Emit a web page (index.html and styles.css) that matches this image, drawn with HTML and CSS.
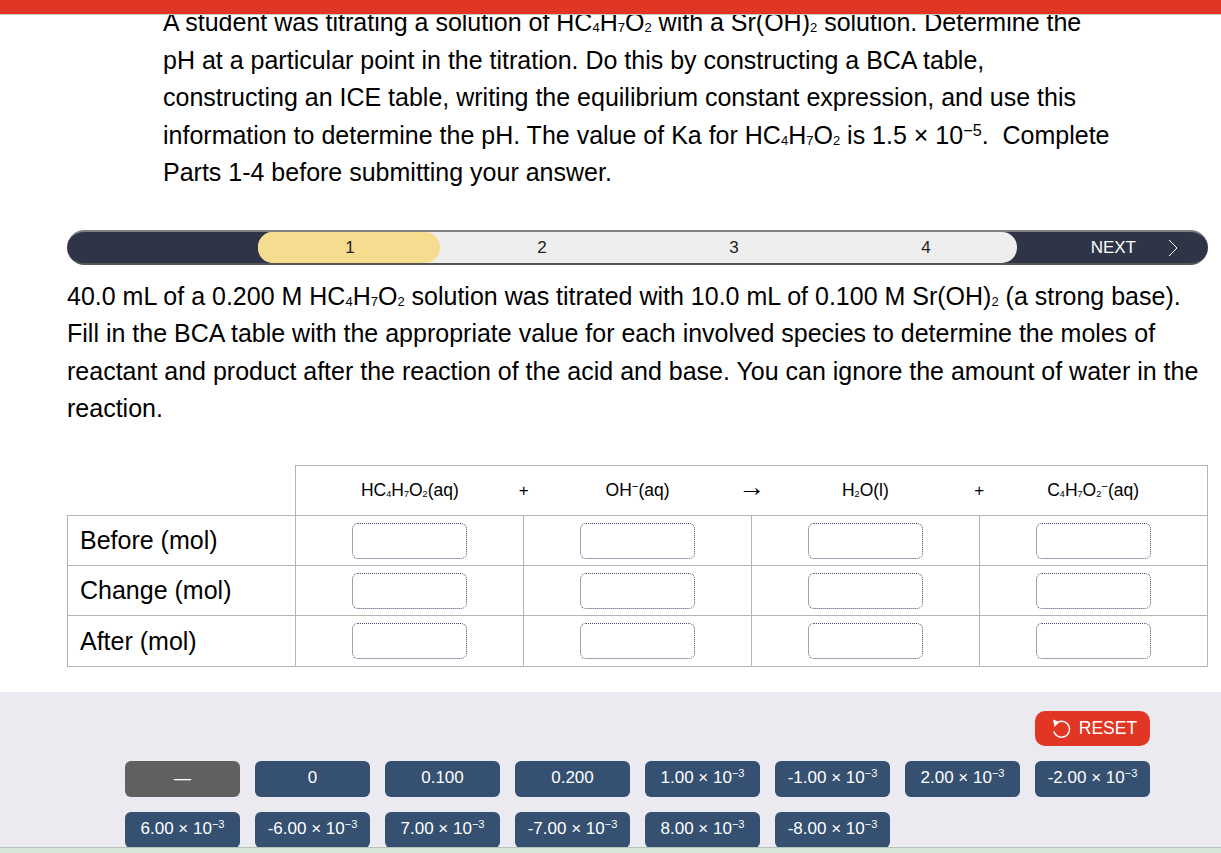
FILE: index.html
```html
<!DOCTYPE html>
<html lang="en">
<head>
    <meta charset="UTF-8">
    <meta name="viewport" content="width=device-width, initial-scale=1.0">
    <title>BCA Table</title>
    <link rel="stylesheet" href="styles.css">
</head>
<body>
    <div class="topbar"></div>

    <p class="prompt">A student was titrating a solution of HC<sub>4</sub>H<sub>7</sub>O<sub>2</sub> with a Sr(OH)<sub>2</sub> solution. Determine the pH at a particular point in the titration. Do this by constructing a BCA table, constructing an ICE table, writing the equilibrium constant expression, and use this information to determine the pH. The value of Ka for HC<sub>4</sub>H<sub>7</sub>O<sub>2</sub> is 1.5 × 10<sup>−5</sup>.&nbsp; Complete Parts 1-4 before submitting your answer.</p>

    <div class="stepper">
        <div class="rail">
            <div class="step active"><span>1</span></div>
            <div class="step"><span>2</span></div>
            <div class="step"><span>3</span></div>
            <div class="step"><span>4</span></div>
        </div>
        <div class="next">
            <span>NEXT</span>
            <svg class="chevron" width="10" height="18" viewBox="0 0 10 18"><path d="M1 1l8 8-8 8" fill="none" stroke="#fff" stroke-width="1"/></svg>
        </div>
    </div>

    <p class="question">40.0 mL of a 0.200 M HC<sub>4</sub>H<sub>7</sub>O<sub>2</sub> solution was titrated with 10.0 mL of 0.100 M Sr(OH)<sub>2</sub> (a strong base). Fill in the BCA table with the appropriate value for each involved species to determine the moles of reactant and product after the reaction of the acid and base. You can ignore the amount of water in the reaction.</p>

    <table class="bca">
        <tr class="head">
            <th class="blank"></th>
            <th colspan="4">
                <div class="equation">
                    <span class="species">HC<sub>4</sub>H<sub>7</sub>O<sub>2</sub>(aq)</span>
                    <span class="op">+</span>
                    <span class="species">OH<sup>−</sup>(aq)</span>
                    <span class="op arrow">→</span>
                    <span class="species">H<sub>2</sub>O(l)</span>
                    <span class="op">+</span>
                    <span class="species">C<sub>4</sub>H<sub>7</sub>O<sub>2</sub><sup>−</sup>(aq)</span>
                </div>
            </th>
        </tr>
        <tr>
            <td class="label">Before (mol)</td>
            <td><div class="drop"></div></td>
            <td><div class="drop"></div></td>
            <td><div class="drop"></div></td>
            <td><div class="drop"></div></td>
        </tr>
        <tr>
            <td class="label">Change (mol)</td>
            <td><div class="drop"></div></td>
            <td><div class="drop"></div></td>
            <td><div class="drop"></div></td>
            <td><div class="drop"></div></td>
        </tr>
        <tr class="last">
            <td class="label">After (mol)</td>
            <td><div class="drop"></div></td>
            <td><div class="drop"></div></td>
            <td><div class="drop"></div></td>
            <td><div class="drop"></div></td>
        </tr>
    </table>

    <div class="tray">
        <div class="tray-actions">
            <button class="reset">
                <svg width="20" height="20" viewBox="0 0 20 20"><path d="M6.5 2.8A8 8 0 1 1 1.9 12.5" fill="none" stroke="#fff" stroke-width="1.5"/><path d="M1 .5l6.5 2.5-5 5z" fill="#fff"/></svg>
                RESET
            </button>
        </div>
        <div class="tiles">
            <button class="tile used">—</button>
            <button class="tile">0</button>
            <button class="tile">0.100</button>
            <button class="tile">0.200</button>
            <button class="tile">1.00 × 10<sup>−3</sup></button>
            <button class="tile">-1.00 × 10<sup>−3</sup></button>
            <button class="tile">2.00 × 10<sup>−3</sup></button>
            <button class="tile">-2.00 × 10<sup>−3</sup></button>
            <button class="tile">6.00 × 10<sup>−3</sup></button>
            <button class="tile">-6.00 × 10<sup>−3</sup></button>
            <button class="tile">7.00 × 10<sup>−3</sup></button>
            <button class="tile">-7.00 × 10<sup>−3</sup></button>
            <button class="tile">8.00 × 10<sup>−3</sup></button>
            <button class="tile">-8.00 × 10<sup>−3</sup></button>
        </div>
    </div>

    <div class="footer-strip"></div>
</body>
</html>
```

FILE: styles.css
```css
html, body {
    margin: 0;
    height: 853px;
    overflow: hidden;
}
body {
    position: relative;
    padding-top: 4px;
    box-sizing: border-box;
    font-family: "Liberation Sans", Arial, sans-serif;
    color: #000;
    background: #fff;
}
.topbar {
    position: absolute;
    top: 0;
    left: 0;
    right: 0;
    height: 14px;
    background: #e03623;
    border-bottom: 1px solid #c8c8c8;
    z-index: 2;
}
sub {
    font-size: 0.52em;
    line-height: 0;
    vertical-align: -0.1em;
}
sup {
    font-size: 0.65em;
    line-height: 0;
    vertical-align: 0.5em;
}
.prompt {
    margin: 0 0 38.5px 163px;
    width: 950px;
    font-size: 25px;
    line-height: 37.5px;
}
.stepper {
    display: flex;
    justify-content: space-between;
    height: 35px;
    margin: 0 13px 0 67px;
    padding-left: 191px;
    box-sizing: border-box;
    background: #2f3547;
    border-top: 2px solid #808080;
    border-bottom: 2px solid #555;
    border-radius: 18px;
    font-size: 17px;
}
.rail {
    display: flex;
    width: 759px;
    background: #eee;
    border-radius: 15px;
}
.step {
    flex: 0 0 192px;
    display: flex;
    align-items: center;
    justify-content: center;
    color: #222;
}
.step:first-child {
    margin-left: -4px;
}
.step.active {
    position: relative;
    z-index: 0;
}
.step.active::before {
    content: "";
    position: absolute;
    top: 0;
    bottom: 0;
    left: 4px;
    right: 6px;
    background: #f5dc8f;
    border-radius: 15px;
    z-index: -1;
}
.next {
    flex: 1;
    display: flex;
    align-items: center;
    justify-content: flex-end;
    gap: 32px;
    padding-right: 30px;
    color: #fff;
}
.question {
    margin: 12.5px 10px 37.5px 67px;
    font-size: 25px;
    line-height: 37.5px;
}
.bca {
    border-collapse: separate;
    border-spacing: 0;
    margin-left: 67px;
    table-layout: fixed;
    width: 1141px;
}
.bca th, .bca td {
    box-sizing: border-box;
    height: 50px;
    padding: 7px 0 0;
    vertical-align: top;
    text-align: center;
    border-right: 1px solid #b4b4b4;
    border-bottom: 1px solid #b4b4b4;
}
.bca th {
    height: 51px;
    padding: 0;
    vertical-align: middle;
    border-top: 1px solid #b4b4b4;
}
.bca .blank {
    width: 229px;
    border-top: none;
}
.bca .label {
    padding: 0 0 0 12px;
    vertical-align: middle;
    text-align: left;
    font-size: 25px;
    border-left: 1px solid #b4b4b4;
}
.bca .last td {
    height: 51px;
}
.equation {
    display: flex;
    align-items: center;
    font-size: 17.5px;
    font-weight: normal;
}
.species {
    flex: 1;
}
.op {
    width: 0;
    display: flex;
    justify-content: center;
    font-size: 17px;
}
.op.arrow {
    font-size: 27px;
    line-height: 20px;
    padding-bottom: 8px;
}
.drop {
    width: 115px;
    height: 36px;
    margin: 0 auto;
    box-sizing: border-box;
    border: 1px dotted #3d4a6b;
    border-radius: 6px;
}
.tray {
    margin-top: 25px;
    height: 161px;
    padding: 19px 71px 0 125px;
    box-sizing: border-box;
    background: #eaeaf0;
}
.tray-actions {
    display: flex;
    justify-content: flex-end;
    margin-bottom: 15px;
}
.tiles {
    display: flex;
    flex-wrap: wrap;
    gap: 15px;
}
button {
    font-family: inherit;
    border: none;
    color: #fff;
    padding: 0;
}
.tile {
    width: 115px;
    height: 36px;
    padding-bottom: 2px;
    background: #355071;
    border-radius: 6px;
    font-size: 17px;
}
.tile.used {
    background: #606060;
    padding-bottom: 0;
}
.reset {
    display: flex;
    align-items: center;
    justify-content: center;
    gap: 7px;
    width: 115px;
    height: 35px;
    padding-left: 4px;
    background: #e03623;
    border-radius: 10px;
    font-size: 17.5px;
}
.footer-strip {
    position: absolute;
    left: 0;
    right: 0;
    bottom: 0;
    height: 5px;
    background: #d8e6da;
    border-top: 1px solid #b4c4b8;
}
```
